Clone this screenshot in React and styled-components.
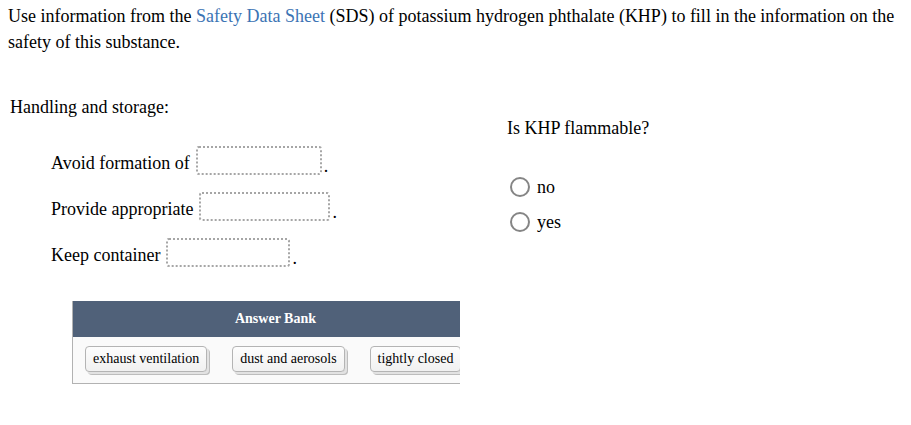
import styled, { createGlobalStyle } from "styled-components";

const GlobalStyle = createGlobalStyle`
  body {
    margin: 0;
    background: #fff;
    font-family: "Liberation Serif", "Times New Roman", serif;
    color: #000;
  }
`;

const blanks = [
  { label: "Avoid formation of", width: 126 },
  { label: "Provide appropriate", width: 131 },
  { label: "Keep container", width: 124 },
];

const answers = ["exhaust ventilation", "dust and aerosols", "tightly closed"];

export default function App() {
  return (
    <Page>
      <GlobalStyle />
      <Intro>
        Use information from the <Link href="#">Safety Data Sheet</Link> (SDS)
        of potassium hydrogen phthalate (KHP) to fill in the information on the
        safety of this substance.
      </Intro>
      <Columns>
        <Handling>
          <SectionTitle>Handling and storage:</SectionTitle>
          <BlankList>
            {blanks.map((b) => (
              <BlankRow key={b.label}>
                <Label>{b.label}</Label>
                <DropBox $width={b.width} />
                <Period>.</Period>
              </BlankRow>
            ))}
          </BlankList>
          <BankClip>
            <Bank>
              <BankHeader>Answer Bank</BankHeader>
              <BankBody>
                {answers.map((a) => (
                  <Tile key={a}>{a}</Tile>
                ))}
              </BankBody>
            </Bank>
          </BankClip>
        </Handling>
        <Question>
          <QuestionText>Is KHP flammable?</QuestionText>
          <Options>
            <Option>
              <Radio />
              no
            </Option>
            <Option>
              <Radio />
              yes
            </Option>
          </Options>
        </Question>
      </Columns>
    </Page>
  );
}

const Page = styled.div`
  width: 911px;
  height: 425px;
  padding: 3px 0 0 8px;
  box-sizing: border-box;
  overflow: hidden;
`;

const Intro = styled.p`
  margin: 0;
  font-size: 18px;
  line-height: 26px;
  max-width: 895px;
`;

const Link = styled.a`
  color: #3c74b4;
  text-decoration: none;
`;

const Columns = styled.div`
  display: grid;
  grid-template-columns: 499px 1fr;
  margin-top: 42px;
`;

const Handling = styled.section`
  padding-left: 2px;
`;

const SectionTitle = styled.div`
  font-size: 18px;
  line-height: 20px;
`;

const BlankList = styled.div`
  display: flex;
  flex-direction: column;
  gap: 17px;
  margin-top: 29px;
  padding-left: 41px;
`;

const BlankRow = styled.div`
  display: flex;
  align-items: center;
  font-size: 18px;
  line-height: 20px;
`;

const Label = styled.span`
  position: relative;
  top: 2px;
`;

const DropBox = styled.span`
  display: inline-block;
  width: ${(p) => p.$width}px;
  height: 29px;
  box-sizing: border-box;
  border: 2px dotted #a6a6a6;
  border-radius: 3px;
  margin: 0 2px 0 6px;
`;

const Period = styled.span`
  align-self: flex-end;
  position: relative;
  top: 1px;
`;

const BankClip = styled.div`
  width: 388px;
  overflow: hidden;
  margin: 34px 0 0 62px;
`;

const Bank = styled.div`
  width: 405px;
  border: 1px solid #b2b2b2;
  border-top: none;
`;

const BankHeader = styled.div`
  background: #506179;
  color: #fff;
  font-weight: bold;
  font-size: 14px;
  height: 36px;
  line-height: 36px;
  text-align: center;
`;

const BankBody = styled.div`
  display: flex;
  gap: 25px;
  background: #fafafa;
  padding: 9px 12px 11px 12px;
`;

const Tile = styled.div`
  font-size: 14px;
  line-height: 24px;
  padding: 0 7px;
  border: 1px solid #b4b4b4;
  border-radius: 4px;
  background: linear-gradient(#fdfdfd, #f1f1f1);
  box-shadow: 2px 2px 0 #e2e2e2, 3px 3px 0 #bdbdbd;
  white-space: nowrap;
`;

const Question = styled.section`
  padding-top: 21px;
`;

const QuestionText = styled.div`
  font-size: 18px;
  line-height: 20px;
`;

const Options = styled.div`
  display: flex;
  flex-direction: column;
  gap: 15px;
  margin-top: 39px;
  padding-left: 3px;
`;

const Option = styled.label`
  display: flex;
  align-items: center;
  gap: 7px;
  font-size: 18px;
  line-height: 20px;
`;

const Radio = styled.span`
  width: 16px;
  height: 16px;
  border: 2px solid #858585;
  border-radius: 50%;
`;
